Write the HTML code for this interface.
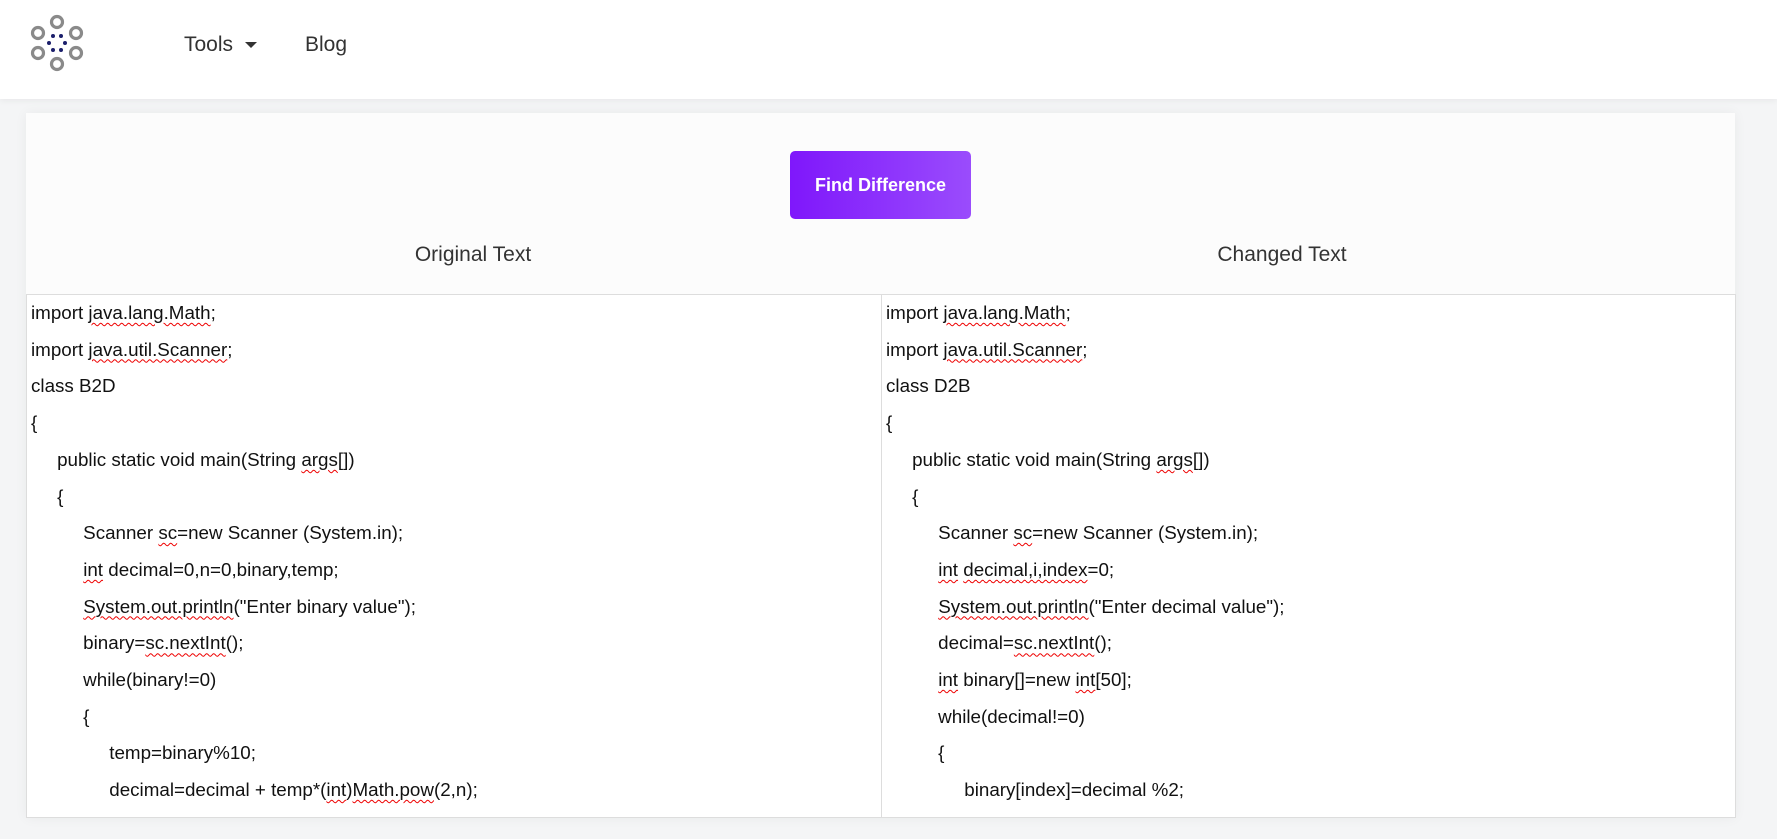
<!DOCTYPE html>
<html><head><meta charset="utf-8"><style>
*{box-sizing:border-box;margin:0;padding:0}
html,body{width:1777px;height:839px;overflow:hidden;background:#f4f5f6;font-family:"Liberation Sans",sans-serif}
.hdr{position:absolute;left:0;top:0;width:1777px;height:99px;background:#fff;box-shadow:0 2px 6px rgba(0,0,0,.05)}
.nav{position:absolute;top:33px;font-size:21px;color:#333}
.card{position:absolute;left:26px;top:113px;width:1709px;height:705px;background:#fcfcfc;box-shadow:0 0 12px rgba(0,0,0,.05)}
.btn{position:absolute;left:790px;top:151px;width:181px;height:68px;border-radius:5px;background:linear-gradient(90deg,#7f17fb,#9a4cfc);color:#fff;font-weight:bold;font-size:18px;text-align:center;line-height:68px}
.lbl{position:absolute;top:243px;font-size:21px;color:#333;width:600px;text-align:center}
.ta{position:absolute;top:294px;height:524px;width:856px;background:#fff;border:1px solid #ddd;overflow:hidden;padding:0 4px;font-size:18.8px;line-height:36.7px;color:#111;white-space:pre}
.u{text-decoration:underline wavy #e00;text-decoration-thickness:1px;text-underline-offset:3px}
</style></head><body>
<div class="hdr">
<svg style="position:absolute;left:0;top:0" width="100" height="99">
<g fill="none" stroke="#8a8a8a" stroke-width="3.2">
<circle cx="57" cy="22" r="5.5"/><circle cx="57" cy="64" r="5.5"/>
<circle cx="38" cy="33" r="5.5"/><circle cx="76" cy="33" r="5.5"/>
<circle cx="38" cy="53" r="5.5"/><circle cx="76" cy="53" r="5.5"/></g>
<g fill="#1b1f6b"><circle cx="53" cy="36" r="2"/><circle cx="61" cy="36" r="2"/><circle cx="49" cy="43" r="2"/><circle cx="65" cy="43" r="2"/><circle cx="53" cy="50" r="2"/><circle cx="61" cy="50" r="2"/></g>
</svg>
<div class="nav" style="left:184px">Tools <span style="display:inline-block;width:0;height:0;border-left:6px solid transparent;border-right:6px solid transparent;border-top:6px solid #333;vertical-align:middle;margin-left:6px"></span></div>
<div class="nav" style="left:305px">Blog</div>
</div>
<div class="card"></div>
<div class="btn">Find Difference</div>
<div class="lbl" style="left:173px">Original Text</div>
<div class="lbl" style="left:982px">Changed Text</div>
<div class="ta" style="left:26px">import <span class="u">java.lang.Math</span>;
import <span class="u">java.util.Scanner</span>;
class B2D
{
     public static void main(String <span class="u">args</span>[])
     {
          Scanner <span class="u">sc</span>=new Scanner (System.in);
          <span class="u">int</span> decimal=0,n=0,binary,temp;
          <span class="u">System.out.println</span>("Enter binary value");
          binary=<span class="u">sc.nextInt</span>();
          while(binary!=0)
          {
               temp=binary%10;
               decimal=decimal + temp*(<span class="u">int</span>)<span class="u">Math.pow</span>(2,n);
               binary=binary/10;</div>
<div class="ta" style="left:881px;width:855px">import <span class="u">java.lang.Math</span>;
import <span class="u">java.util.Scanner</span>;
class D2B
{
     public static void main(String <span class="u">args</span>[])
     {
          Scanner <span class="u">sc</span>=new Scanner (System.in);
          <span class="u">int</span> <span class="u">decimal,i,index</span>=0;
          <span class="u">System.out.println</span>("Enter decimal value");
          decimal=<span class="u">sc.nextInt</span>();
          <span class="u">int</span> binary[]=new <span class="u">int</span>[50];
          while(decimal!=0)
          {
               binary[index]=decimal %2;
               decimal=decimal/2;</div>
</body></html>
